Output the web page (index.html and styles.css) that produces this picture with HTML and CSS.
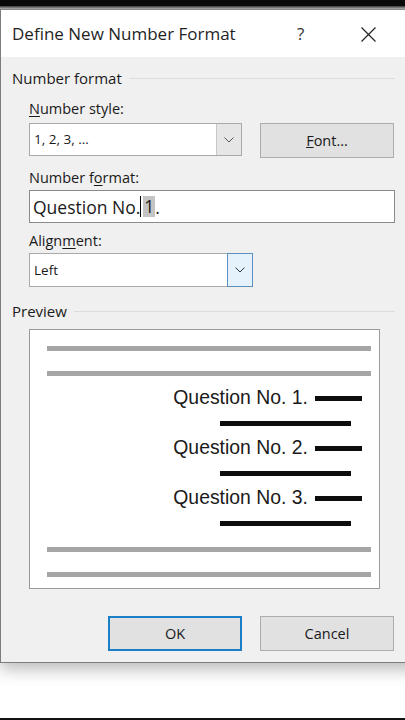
FILE: index.html
```html
<!DOCTYPE html>
<html>
<head>
<meta charset="utf-8">
<link rel="stylesheet" href="styles.css">
</head>
<body>
<div class="page">
  <div class="topbar"></div>
  <div class="topshade"></div>
  <div class="dialog">
    <div class="titlebar">
      <span class="title">Define New Number Format</span>
      <span class="help">?</span>
      <span class="close"><svg width="15" height="15" viewBox="0 0 15 15"><path d="M0.5 0.5 L14.5 14.5 M14.5 0.5 L0.5 14.5" stroke="#222" stroke-width="1.2" fill="none"/></svg></span>
    </div>
    <div class="content">
      <div class="group"><span class="group-label">Number format</span><span class="group-line"></span></div>
      <div class="inner">
        <div class="label"><u>N</u>umber style:</div>
        <div class="row">
          <div class="combo combo-style">
            <span class="combo-text">1, 2, 3, …</span>
            <span class="drop"><svg width="10" height="6" viewBox="0 0 10 6"><path d="M0.5 0.5 L5 5 L9.5 0.5" stroke="#555" stroke-width="1" fill="none"/></svg></span>
          </div>
          <div class="btn btn-font"><u>F</u>ont...</div>
        </div>
        <div class="label label-gap">Number f<u>o</u>rmat:</div>
        <div class="textbox"><span>Question No.</span><span class="caret"></span><span class="sel">1</span><span>.</span></div>
        <div class="label label-gap2">Align<u>m</u>ent:</div>
        <div class="combo combo-align">
          <span class="combo-text">Left</span>
          <span class="drop drop-active"><svg width="10" height="6" viewBox="0 0 10 6"><path d="M0.5 0.5 L5 5 L9.5 0.5" stroke="#333" stroke-width="1" fill="none"/></svg></span>
        </div>
      </div>
      <div class="group group-preview"><span class="group-label">Preview</span><span class="group-line"></span></div>
      <div class="preview">
        <div class="gl gl1"></div>
        <div class="gl gl2"></div>
        <div class="qrow q1"><span class="qtext">Question No. 1.</span><span class="qbar"></span></div>
        <div class="bl"></div>
        <div class="qrow"><span class="qtext">Question No. 2.</span><span class="qbar"></span></div>
        <div class="bl"></div>
        <div class="qrow"><span class="qtext">Question No. 3.</span><span class="qbar"></span></div>
        <div class="bl"></div>
        <div class="gl gl3"></div>
        <div class="gl gl2"></div>
      </div>
      <div class="buttons">
        <div class="btn btn-ok">OK</div>
        <div class="btn btn-cancel">Cancel</div>
      </div>
    </div>
  </div>
  <div class="spacer"></div>
  <div class="bottombar"></div>
</div>
</body>
</html>
```
FILE: styles.css
```css
html, body {
  margin: 0;
  padding: 0;
  background: #ffffff;
}
.page {
  width: 405px;
  height: 720px;
  overflow: hidden;
  display: flex;
  flex-direction: column;
  font-family: "Open Sans", "Noto Sans", sans-serif;
  color: #1a1a1a;
}
.topbar {
  height: 6px;
  background: #0a0a0a;
  flex: none;
}
.topshade {
  height: 3px;
  background: linear-gradient(#3a3a3a, #bdbdbd);
  flex: none;
}
.dialog {
  flex: none;
  width: 430px;
  border-left: 1px solid #7c7c7c;
  border-top: 1px solid #8a8a8a;
  border-bottom: 1px solid #7c7c7c;
  box-shadow: 0 6px 16px rgba(0, 0, 0, 0.28);
  background: #f0f0f0;
}
.titlebar {
  height: 47px;
  background: #ffffff;
  display: flex;
  align-items: center;
}
.title {
  margin-left: 11px;
  font-size: 17px;
  width: 282px;
  color: #1f1f1f;
}
.help {
  font-size: 17px;
  width: 64px;
  color: #333;
  margin-left: 3px;
}
.close {
  display: flex;
  align-items: center;
  margin-top: 1px;
}
.content {
  padding: 11px 0 11px 0;
}
.group {
  display: flex;
  align-items: center;
  height: 20px;
  width: 394px;
}
.group-label {
  margin-left: 11px;
  font-size: 15px;
  line-height: 20px;
}
.group-line {
  flex: 1;
  height: 1px;
  background: #dcdcdc;
  margin-left: 7px;
}
.inner {
  padding-left: 28px;
  margin-top: 11px;
}
.label {
  font-size: 14.5px;
  line-height: 20px;
  height: 20px;
}
.label u {
  text-underline-offset: 2px;
}
.label-gap { margin-top: 10px; }
.label-gap2 { margin-top: 8px; }
.row {
  display: flex;
  align-items: flex-start;
  margin-top: 4px;
}
.combo {
  box-sizing: border-box;
  height: 33px;
  background: #ffffff;
  border: 1px solid #a9a9a9;
  display: flex;
  align-items: stretch;
}
.combo-style { width: 213px; }
.combo-align { width: 224px; margin-top: 2px; height: 34px; }
.combo-text {
  flex: 1;
  font-size: 13.5px;
  line-height: 31px;
  padding-left: 4px;
}
.combo-align .combo-text { padding-left: 4px; line-height: 32px; }
.drop {
  width: 24px;
  background: #e6e6e6;
  border-left: 1px solid #c8c8c8;
  display: flex;
  align-items: center;
  justify-content: center;
}
.drop-active {
  background: #e5f1fb;
  border: 1px solid #5a8fbf;
  margin: -1px -1px -1px 0;
}
.btn {
  box-sizing: border-box;
  width: 134px;
  height: 34px;
  background: #e1e1e1;
  border: 1px solid #adadad;
  display: flex;
  align-items: center;
  justify-content: center;
  font-size: 14.5px;
  color: #1a1a1a;
}
.btn-font { margin-left: 18px; height: 35px; }
.textbox {
  box-sizing: border-box;
  margin-top: 2px;
  width: 366px;
  height: 33px;
  background: #ffffff;
  border: 1px solid #8a8a8a;
  display: flex;
  align-items: center;
  padding-left: 3px;
  font-size: 17.5px;
  color: #1a1a1a;
}
.caret {
  width: 1px;
  height: 21px;
  background: #000;
  margin: 0 2px 0 0;
}
.sel {
  background: #c4c4c4;
  padding: 0 1px;
  line-height: 21px;
}
.group-preview {
  margin-top: 14px;
}
.preview {
  box-sizing: border-box;
  margin: 8px 0 0 28px;
  width: 351px;
  height: 260px;
  background: #ffffff;
  border: 1px solid #9a9a9a;
  display: flex;
  flex-direction: column;
  padding: 0 8px 0 17px;
}
.gl {
  height: 5px;
  background: #a5a5a5;
  flex: none;
}
.gl1 { margin-top: 16px; }
.gl2 { margin-top: 20px; }
.gl3 { margin-top: 21px; }
.qrow {
  display: flex;
  justify-content: flex-end;
  align-items: center;
  height: 22px;
  margin-top: 10px;
  padding-right: 9px;
  flex: none;
}
.q1 { margin-top: 10px; }
.qtext {
  font-family: "Liberation Sans", Arial, sans-serif;
  font-size: 19.4px;
  line-height: 22px;
  color: #1a1a1a;
}
.qbar {
  width: 47px;
  height: 5px;
  background: #0d0d0d;
  margin-left: 7px;
  margin-top: 2px;
}
.bl {
  height: 5px;
  width: 131px;
  background: #0d0d0d;
  align-self: flex-end;
  margin-right: 20px;
  margin-top: 13px;
  flex: none;
}
.buttons {
  display: flex;
  margin: 27px 0 0 107px;
  gap: 18px;
}
.btn-ok {
  border: 2px solid #1a7fc4;
  height: 35px;
}
.btn-cancel {
  height: 35px;
}
.spacer { flex: 1; }
.bottombar {
  height: 2px;
  background: #111;
  flex: none;
}
```
